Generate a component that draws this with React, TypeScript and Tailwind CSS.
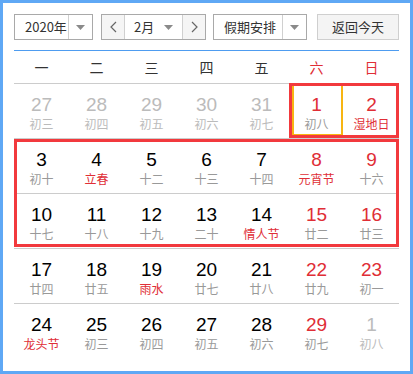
import React from 'react';

type Day = {
  n: number;
  l: string;
  other?: boolean;
  redNum?: boolean;
  redLunar?: boolean;
};

const weeks: Day[][] = [
  [
    { n: 27, l: '初三', other: true },
    { n: 28, l: '初四', other: true },
    { n: 29, l: '初五', other: true },
    { n: 30, l: '初六', other: true },
    { n: 31, l: '初七', other: true },
    { n: 1, l: '初八', redNum: true },
    { n: 2, l: '湿地日', redNum: true, redLunar: true },
  ],
  [
    { n: 3, l: '初十' },
    { n: 4, l: '立春', redLunar: true },
    { n: 5, l: '十二' },
    { n: 6, l: '十三' },
    { n: 7, l: '十四' },
    { n: 8, l: '元宵节', redNum: true, redLunar: true },
    { n: 9, l: '十六', redNum: true },
  ],
  [
    { n: 10, l: '十七' },
    { n: 11, l: '十八' },
    { n: 12, l: '十九' },
    { n: 13, l: '二十' },
    { n: 14, l: '情人节', redLunar: true },
    { n: 15, l: '廿二', redNum: true },
    { n: 16, l: '廿三', redNum: true },
  ],
  [
    { n: 17, l: '廿四' },
    { n: 18, l: '廿五' },
    { n: 19, l: '雨水', redLunar: true },
    { n: 20, l: '廿七' },
    { n: 21, l: '廿八' },
    { n: 22, l: '廿九', redNum: true },
    { n: 23, l: '初一', redNum: true },
  ],
  [
    { n: 24, l: '龙头节', redLunar: true },
    { n: 25, l: '初三' },
    { n: 26, l: '初四' },
    { n: 27, l: '初五' },
    { n: 28, l: '初六' },
    { n: 29, l: '初七', redNum: true },
    { n: 1, l: '初八', other: true },
  ],
];

const weekdays = ['一', '二', '三', '四', '五', '六', '日'];

function Caret() {
  return (
    <svg width="9" height="5" viewBox="0 0 9 5">
      <path d="M0 0h9L4.5 5z" fill="#8a8a8a" />
    </svg>
  );
}

function Chevron({ dir }: { dir: 'left' | 'right' }) {
  return (
    <svg width="7" height="12" viewBox="0 0 7 12">
      <path
        d={dir === 'left' ? 'M6 1L1 6l5 5' : 'M1 1l5 5-5 5'}
        fill="none"
        stroke="#666"
        strokeWidth="1.2"
      />
    </svg>
  );
}

function Select({ label, w }: { label: string; w: string }) {
  return (
    <div className={`flex h-[26px] ${w} border border-[#a9a9a9] bg-white`}>
      <div className="flex flex-1 items-center pl-[10px] text-[13px] text-[#333]">{label}</div>
      <div className="flex w-[24px] items-center justify-center border-l border-[#d0d0d0]">
        <Caret />
      </div>
    </div>
  );
}

function Cell({ d }: { d: Day }) {
  const numColor = d.other ? 'text-[#bbbbbb]' : d.redNum ? 'text-[#e02e36]' : 'text-black';
  const lunarColor = d.other ? 'text-[#bbbbbb]' : d.redLunar ? 'text-[#e02e36]' : 'text-[#999999]';
  return (
    <div className="flex flex-col items-center pt-[10px]">
      <div className={`font-['Liberation_Sans',Arial,sans-serif] text-[19px] leading-[22px] ${numColor}`}>
        {d.n}
      </div>
      <div className={`text-[12px] leading-[16px] ${lunarColor}`}>{d.l}</div>
    </div>
  );
}

export default function App() {
  return (
    <div className="h-[374px] w-[413px] border-[3px] border-[#5fa8f5] bg-white px-[11px] pt-[11px] font-['Noto_Sans_CJK_SC','Noto_Sans',sans-serif]">
      {/* toolbar */}
      <div className="flex items-center">
        <Select label="2020年" w="w-[79px]" />
        <div className="ml-[8px] flex h-[26px] w-[105px] border border-[#a9a9a9] bg-white">
          <div className="flex w-[22px] items-center justify-center bg-[#f5f5f5]">
            <Chevron dir="left" />
          </div>
          <div className="flex flex-1 items-center border-x border-[#d0d0d0] pl-[9px] pr-[9px] text-[13px] text-[#333]">
            <span className="flex-1">2月</span>
            <Caret />
          </div>
          <div className="flex w-[22px] items-center justify-center bg-[#f5f5f5]">
            <Chevron dir="right" />
          </div>
        </div>
        <Select label="假期安排" w="ml-[7px] w-[94px]" />
        <button className="ml-[10px] flex h-[26px] w-[82px] items-center justify-center border border-[#cfcfcf] bg-[#f4f4f4] text-[13px] text-[#333]">
          返回今天
        </button>
      </div>

      <div className="mt-[10px] h-px bg-[#4e9cf0]" />

      {/* week header */}
      <div className="grid h-[33px] grid-cols-7 items-center border-b border-[#cccccc] text-[14px]">
        {weekdays.map((w, i) => (
          <div key={w} className={`text-center ${i >= 5 ? 'text-[#e02e36]' : 'text-[#333]'}`}>
            {w}
          </div>
        ))}
      </div>

      {/* days */}
      <div className="relative">
        {weeks.map((week, wi) => (
          <div
            key={wi}
            className={`grid h-[55px] grid-cols-7 ${wi < weeks.length - 1 ? 'border-b border-[#cccccc]' : ''}`}
          >
            {week.map((d, di) => (
              <Cell key={di} d={d} />
            ))}
          </div>
        ))}

        {/* highlight marks */}
        <div className="absolute left-[278px] top-0 h-[52px] w-[51px] border-2 border-[#f7b512]" />
        <div className="absolute left-[275px] top-[-1px] h-[55px] w-[110px] border-[3px] border-[#f2393d]" />
        <div className="absolute left-0 top-[55px] h-[108px] w-[385px] border-[3px] border-[#f2393d]" />
      </div>
    </div>
  );
}
